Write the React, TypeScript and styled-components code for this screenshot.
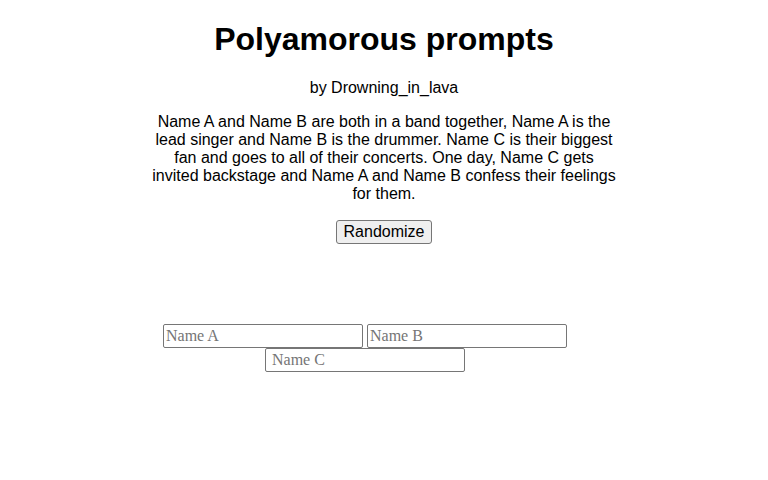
import React from "react";
import styled, { createGlobalStyle } from "styled-components";

const Global = createGlobalStyle`
  html, body { margin: 0; padding: 0; background: #fff; }
  body { font-family: "Liberation Sans", Arial, sans-serif; color: #000; }
`;

const Page = styled.main`
  display: flex;
  flex-direction: column;
  align-items: center;
  padding-top: 21px;
`;

const Title = styled.h1`
  margin: 0 0 21px;
  font-size: 32px;
  font-weight: bold;
  line-height: 37px;
`;

const Byline = styled.p`
  margin: 0 0 16px;
  font-size: 16px;
  line-height: 18px;
`;

const Prompt = styled.p`
  margin: 0 0 17px;
  width: 470px;
  text-align: center;
  font-size: 16px;
  line-height: 18px;
`;

const Button = styled.button`
  font-family: "Liberation Sans", Arial, sans-serif;
  font-size: 16px;
  line-height: 18px;
  padding: 2px 7px;
  background: #efefef;
  color: #000;
  border: 1px solid #767676;
  border-radius: 3px;
`;

const Names = styled.div`
  margin: 80px 38px 0 0;
  width: 404px;
  display: flex;
  flex-wrap: wrap;
  justify-content: center;
  column-gap: 4px;
  row-gap: 0;
`;

const NameInput = styled.input`
  box-sizing: border-box;
  width: 200px;
  height: 24px;
  padding: 1px 2px;
  font-family: "Liberation Serif", "Times New Roman", serif;
  font-size: 16px;
  border: 1px solid #767676;
  border-radius: 2px;
  background: #fff;
  &::placeholder { color: #757575; }
`;

export default function App() {
  return (
    <>
      <Global />
      <Page>
        <Title>Polyamorous prompts</Title>
        <Byline>by Drowning_in_lava</Byline>
        <Prompt>
          Name A and Name B are both in a band together, Name A is the lead singer and Name B is the
          drummer. Name C is their biggest fan and goes to all of their concerts. One day, Name C gets
          invited backstage and Name A and Name B confess their feelings for them.
        </Prompt>
        <Button>Randomize</Button>
        <Names>
          <NameInput placeholder="Name A" />
          <NameInput placeholder="Name B" />
          <NameInput placeholder=" Name C" />
        </Names>
      </Page>
    </>
  );
}
